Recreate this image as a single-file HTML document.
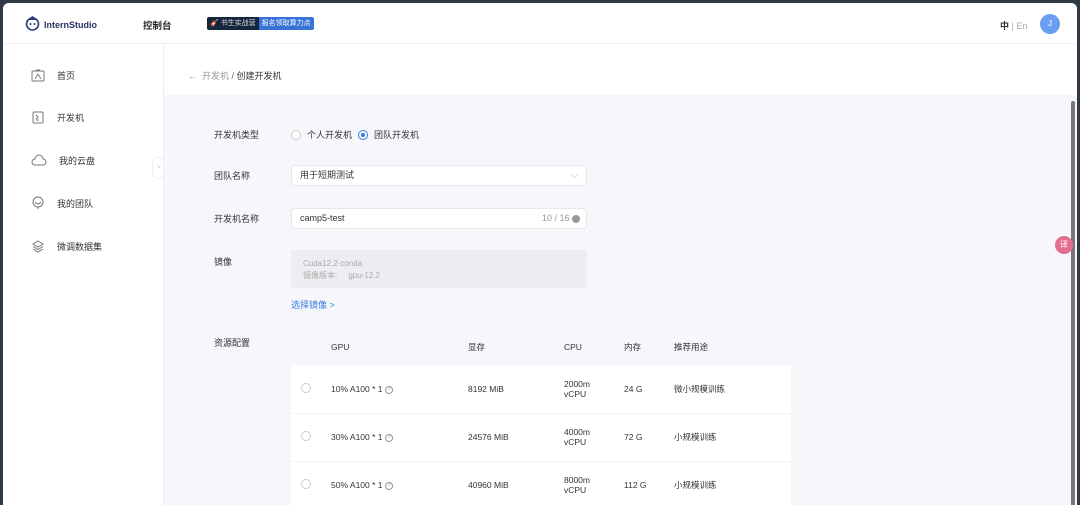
<!DOCTYPE html>
<html><head><meta charset="utf-8"><style>
*{margin:0;padding:0;box-sizing:border-box}
body{width:1080px;height:505px;overflow:hidden;background:#2f3a45;font-family:"Liberation Sans","Noto Sans CJK SC",sans-serif;font-size:9px;color:#333;position:relative}
.win{position:absolute;left:3px;top:3px;width:1074px;height:502px;background:#fff;border-radius:6px 6px 0 0;overflow:hidden}
.hdr{position:absolute;left:0;top:0;right:0;height:41px;border-bottom:1px solid #eef0f3;background:#fff}
.abs{position:absolute}
.side{position:absolute;left:0;top:41px;width:160px;bottom:0;background:#fff}
.nav{position:absolute;left:28px;display:flex;align-items:center;font-size:9px;color:#333}
.nav svg{margin-right:12px}
.main{position:absolute;left:160px;top:41px;right:0;bottom:0;background:#f5f7fa;border-left:1px solid #eee}
.bc{position:absolute;left:0;top:0;right:0;height:51px;background:#fff}
.lbl{position:absolute;left:50px;font-size:9px;color:#333}
.inp{position:absolute;left:127px;width:296px;height:21px;background:#fff;border:1px solid #e4e7ec;border-radius:4px;font-size:9px;padding-left:8px;line-height:19px}
table{position:absolute;left:127px;top:284px;width:500px;border-collapse:collapse;font-size:8.5px;color:#333}
td,th{text-align:left;font-weight:normal;padding:0}
th{height:37px;background:#f5f7fa}
tr.r td{height:48px;background:#fff;border-bottom:1px solid #f0f1f3}
.rad{display:inline-block;width:10px;height:10px;border:1px solid #ccc;border-radius:50%;background:#fff}
.q{display:inline-block;width:8px;height:8px;border:1px solid #999;border-radius:50%;font-size:6px;line-height:6px;text-align:center;color:#999;vertical-align:middle}
</style></head><body>
<div class="win">
<div class="hdr">
 <svg class="abs" style="left:21px;top:12px" width="17" height="17" viewBox="0 0 17 17"><circle cx="8.5" cy="9" r="6" fill="#fff" stroke="#2a3a7a" stroke-width="1.6"/><path d="M3 5 L8.5 1 L14 5Z" fill="#2a3a7a"/><circle cx="6.5" cy="9" r="1" fill="#2a3a7a"/><circle cx="10.5" cy="9" r="1" fill="#2a3a7a"/></svg>
 <div class="abs" style="left:41px;top:17px;font-size:9px;font-weight:bold;color:#2a3066">InternStudio</div>
 <div class="abs" style="left:140px;top:15px;font-size:9.5px;font-weight:bold;color:#222">控制台</div>
 <div class="abs" style="left:204px;top:14px;height:13px;display:flex;font-size:7px;line-height:13px;border-radius:2px;overflow:hidden">
  <span style="background:#14273f;color:#ddd;padding:0 3px">🎸 书生实战营</span><span style="background:#3773d6;color:#fff;padding:0 3px">报名领取算力点</span></div>
 <div class="abs" style="left:997px;top:16px;font-size:9px"><b>中</b> <span style="color:#aaa">| En</span></div>
 <div class="abs" style="left:1037px;top:11px;width:20px;height:20px;border-radius:50%;background:#6b9ef0;color:#fff;font-size:8px;text-align:center;line-height:20px">J</div>
</div>
<div class="side">
 <div class="nav" style="top:25px"><svg width="14" height="13" viewBox="0 0 14 13" fill="none" stroke="#777" stroke-width="1"><rect x="1" y="2" width="12" height="10" rx="1"/><path d="M5 1h4M7 5l-3 5M7 5l3 5"/></svg>首页</div>
 <div class="nav" style="top:67px"><svg width="14" height="13" viewBox="0 0 14 13" fill="none" stroke="#777" stroke-width="1"><rect x="2" y="1" width="10" height="11" rx="1"/><path d="M5 4l2 2-2 2M5 9h3"/></svg>开发机</div>
 <div class="nav" style="top:110px"><svg width="16" height="13" viewBox="0 0 16 13" fill="none" stroke="#777" stroke-width="1"><path d="M4 11a3 3 0 0 1 0-6 4 4 0 0 1 8 0 3 3 0 0 1 0 6z"/></svg>我的云盘</div>
 <div class="nav" style="top:152px"><svg width="14" height="14" viewBox="0 0 14 14" fill="none" stroke="#777" stroke-width="1"><circle cx="7" cy="6" r="5"/><path d="M4 6q3 4 6 0M7 11v2"/></svg>我的团队</div>
 <div class="nav" style="top:195px"><svg width="14" height="14" viewBox="0 0 14 14" fill="none" stroke="#777" stroke-width="1"><path d="M7 2l5 3-5 3-5-3z M2 7.5l5 3 5-3 M2 10l5 3 5-3"/></svg>微调数据集</div>
 <div class="abs" style="left:149px;top:113px;width:14px;height:22px;border:1px solid #eee;border-radius:11px;background:#fff;font-size:6px;color:#bbb;line-height:20px;text-align:center">&gt;</div>
</div>
<div class="main">
 <div class="bc"><div class="abs" style="left:24px;top:25px;font-size:9px;color:#999">←&nbsp; 开发机 <span style="color:#666">/</span> <span style="color:#333">创建开发机</span></div></div>
 <div class="lbl" style="top:84px">开发机类型</div>
 <div class="abs" style="left:127px;top:84px;font-size:9px;display:flex;align-items:center"><span class="rad" style="margin-right:6px"></span>个人开发机<span style="display:inline-block;width:10px;height:10px;border:1px solid #3b7ce0;border-radius:50%;margin:0 6px 0 6px;position:relative"><span style="position:absolute;left:2px;top:2px;width:4px;height:4px;border-radius:50%;background:#3b7ce0"></span></span>团队开发机</div>
 <div class="lbl" style="top:125px">团队名称</div>
 <div class="inp" style="top:121px">用于短期测试<span style="position:absolute;right:8px;color:#aaa">⌵</span></div>
 <div class="lbl" style="top:168px">开发机名称</div>
 <div class="inp" style="top:164px">camp5-test<span style="position:absolute;right:6px;color:#999">10 / 16 <span style="display:inline-block;width:8px;height:8px;border-radius:50%;background:#999;vertical-align:middle"></span></span></div>
 <div class="lbl" style="top:211px">镜像</div>
 <div class="abs" style="left:127px;top:206px;width:296px;height:38px;background:#eceef1;border-radius:3px;font-size:8px;color:#aaa;padding:8px 0 0 12px;line-height:12px">Cuda12.2-conda<br>镜像版本: &nbsp; &nbsp; gpu-12.2</div>
 <div class="abs" style="left:127px;top:254px;font-size:9px;color:#3b7ce0">选择镜像 &gt;</div>
 <div class="lbl" style="top:292px">资源配置</div>
 <table>
  <tr><th style="width:40px"></th><th style="width:137px">GPU</th><th style="width:96px">显存</th><th style="width:60px">CPU</th><th style="width:50px">内存</th><th>推荐用途</th></tr>
  <tr class="r"><td style="padding-left:10px"><span class="rad"></span></td><td>10% A100 * 1 <span class="q">?</span></td><td>8192 MiB</td><td>2000m<br>vCPU</td><td>24 G</td><td>微小规模训练</td></tr>
  <tr class="r"><td style="padding-left:10px"><span class="rad"></span></td><td>30% A100 * 1 <span class="q">?</span></td><td>24576 MiB</td><td>4000m<br>vCPU</td><td>72 G</td><td>小规模训练</td></tr>
  <tr class="r"><td style="padding-left:10px"><span class="rad"></span></td><td>50% A100 * 1 <span class="q">?</span></td><td>40960 MiB</td><td>8000m<br>vCPU</td><td>112 G</td><td>小规模训练</td></tr>
 </table>
 <div class="abs" style="right:2px;top:57px;width:4px;height:410px;background:#7a7676;border-radius:2px"></div>
 <div class="abs" style="right:4px;top:192px;width:18px;height:18px;border-radius:50%;background:#e46e8f;color:#fff;font-size:8px;text-align:center;line-height:18px">译</div>
</div>
</div>
</body></html>
